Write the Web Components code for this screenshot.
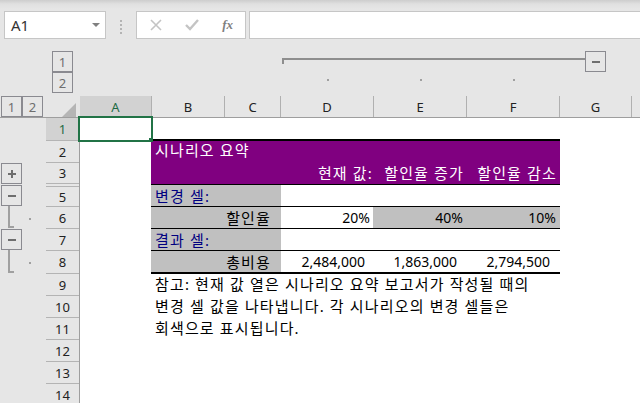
<!DOCTYPE html>
<html lang="ko">
<head>
<meta charset="utf-8">
<title>시나리오 요약</title>
<style>
    html, body { margin: 0; padding: 0; background: #fff; }
    body { width: 640px; height: 403px; overflow: hidden; font-family: "Noto Sans", "Noto Sans CJK KR", sans-serif; }
    sheet-cell.gray { --fill: #c0c0c0; }
    sheet-cell.white { --fill: #fff; }
    sheet-cell.purple { --fill: #800080; color: #fff; }
    sheet-cell.blue { color: #000080; }
    sheet-cell.thin { --line: 1px; }
    sheet-cell.thick { --line: 2px; }
    sheet-cell.top { --top: 1px; }
    sheet-cell.num { font-size: 14px; letter-spacing: 0; }
    sheet-cell.up1 { --up: 1px; }
    sheet-cell.up3 { --up: 3px; }
    sheet-cell.up4 { --up: 4px; }
</style>
</head>
<body>
<excel-window>
    <formula-bar slot="bar"></formula-bar>
    <outline-top slot="bar"></outline-top>
    <column-header slot="bar"></column-header>
    <outline-left slot="left"></outline-left>
    <row-numbers slot="left"></row-numbers>
    <sheet-view>
        <sheet-row h="23">
            <sheet-cell col="2" span="5" class="thick"></sheet-cell>
        </sheet-row>
        <sheet-row h="22">
            <sheet-cell col="2" span="5" class="purple up4">시나리오 요약</sheet-cell>
        </sheet-row>
        <sheet-row h="21">
            <sheet-cell col="2" span="2" class="purple"></sheet-cell>
            <sheet-cell col="4" class="purple up1" align="right" pad="0">현재 값:</sheet-cell>
            <sheet-cell col="5" class="purple up1" align="right" pad="2">할인율 증가</sheet-cell>
            <sheet-cell col="6" class="purple up1" align="right" pad="3">할인율 감소</sheet-cell>
        </sheet-row>
        <sheet-row h="23">
            <sheet-cell col="2" span="2" class="gray blue thin top">변경 셀:</sheet-cell>
            <sheet-cell col="4" span="3" class="thin top"></sheet-cell>
        </sheet-row>
        <sheet-row h="22">
            <sheet-cell col="2" span="2" class="gray thin" align="right" pad="10">할인율</sheet-cell>
            <sheet-cell col="4" class="white thin num" align="right" pad="3">20%</sheet-cell>
            <sheet-cell col="5" class="gray thin num" align="right" pad="3">40%</sheet-cell>
            <sheet-cell col="6" class="gray thin num" align="right" pad="4">10%</sheet-cell>
        </sheet-row>
        <sheet-row h="22">
            <sheet-cell col="2" span="2" class="gray blue thin">결과 셀:</sheet-cell>
            <sheet-cell col="4" span="3" class="thin"></sheet-cell>
        </sheet-row>
        <sheet-row h="23">
            <sheet-cell col="2" span="2" class="gray thick" align="right" pad="10">총비용</sheet-cell>
            <sheet-cell col="4" class="white thick num" align="right" pad="8">2,484,000</sheet-cell>
            <sheet-cell col="5" class="white thick num" align="right" pad="9">1,863,000</sheet-cell>
            <sheet-cell col="6" class="white thick num" align="right" pad="10">2,794,500</sheet-cell>
        </sheet-row>
        <sheet-row h="22"><sheet-cell col="2" span="5" class="up3">참고: 현재 값 열은 시나리오 요약 보고서가 작성될 때의</sheet-cell></sheet-row>
        <sheet-row h="22"><sheet-cell col="2" span="5" class="up3">변경 셀 값을 나타냅니다. 각 시나리오의 변경 셀들은</sheet-cell></sheet-row>
        <sheet-row h="22"><sheet-cell col="2" span="5" class="up3">회색으로 표시됩니다.</sheet-cell></sheet-row>
    </sheet-view>
</excel-window>

<script>
const COLS = '71px 73px 57px 92px 93px 94px 72px 1fr';
const HEAD_COLS = '72px 73px 56px 93px 93px 93px 72px 1fr';
const FONT = '"Noto Sans", "Noto Sans CJK KR", sans-serif';
const BTN_CSS = `
    .btn { box-sizing: border-box; width: 21px; height: 21px; border: 1px solid #8a8a90; color: #6e6e6e;
        display: flex; align-items: center; justify-content: center; font: 13px ${FONT}; background: #e6e6e6; }
    .btn svg { display: block; }
`;
const PLUS = '<svg width="8" height="8"><path d="M0 3h8v2H0zM3 0h2v8H3z" fill="#6e6e6e"/></svg>';
const MINUS = '<svg width="8" height="8"><path d="M0 3h8v2H0z" fill="#6e6e6e"/></svg>';

function shadow(el, html) {
    el.attachShadow({ mode: 'open' }).innerHTML = html;
}

class ExcelWindow extends HTMLElement {
    connectedCallback() {
        shadow(this, `
            <style>
                :host { display: flex; flex-direction: column; width: 640px; height: 403px; overflow: hidden; background: #e6e6e6; }
                .body { display: flex; flex: 1; min-height: 0; }
                .left { display: flex; flex: none; }
                ::slotted(sheet-view) { flex: 1; }
            </style>
            <slot name="bar"></slot>
            <div class="body">
                <div class="left"><slot name="left"></slot></div>
                <slot></slot>
            </div>`);
    }
}

class FormulaBar extends HTMLElement {
    connectedCallback() {
        shadow(this, `
            <style>
                :host { display: flex; height: 38px; box-sizing: border-box; padding: 11px 0 0 4px;
                    background: linear-gradient(#cdcdcd 0, #e0e0e0 4px, #e6e6e6 9px); }
                .box { box-sizing: border-box; height: 28px; background: #fff; border: 1px solid #c6c6c6; display: flex; align-items: center; }
                .name { width: 102px; padding-left: 6px; font: 15px ${FONT}; color: #333; justify-content: space-between; padding-right: 5px; }
                .name i { width: 0; height: 0; border: 4px solid transparent; border-top-color: #808080; border-bottom: 0; }
                .sep { width: 30px; display: flex; justify-content: center; align-items: center; }
                .sep b { width: 2px; height: 2px; background: #b4b4b4; box-shadow: 0 4px #b4b4b4, 0 8px #b4b4b4, 0 -4px #b4b4b4; }
                .fx { width: 110px; justify-content: space-between; padding: 0 12px 0 13px; }
                .fx span { font: italic bold 13px "Liberation Serif", serif; color: #7f7f7f; }
                .input { flex: 1; margin-left: 3px; border-right: 0; }
            </style>
            <div class="box name">A1<i></i></div>
            <div class="sep"><b></b></div>
            <div class="box fx">
                <svg width="12" height="12" viewBox="0 0 12 12"><path d="M1 1l10 10M11 1L1 11" stroke="#c4c4c4" stroke-width="1.6" fill="none"/></svg>
                <svg width="14" height="12" viewBox="0 0 14 12"><path d="M1 6l4 4 8-9" stroke="#c4c4c4" stroke-width="2.4" fill="none"/></svg>
                <span>fx</span>
            </div>
            <div class="box input"></div>`);
    }
}

class OutlineTop extends HTMLElement {
    connectedCallback() {
        shadow(this, `
            <style>${BTN_CSS}
                :host { display: flex; height: 58px; box-sizing: border-box; padding: 13px 0 0 52px; }
                .levels { width: 229px; }
                .group { display: grid; grid-template-columns: 93px 93px 93px 25px 21px; grid-template-rows: 21px 7px 2px; }
                .bracket { grid-column: 1 / 5; margin: 7px 0 0 1px; height: 6px; box-sizing: border-box; border: solid #8e8e8e; border-width: 2px 0 0 2px; }
                .dot { grid-row: 3; justify-self: center; width: 2px; height: 2px; background: #a0a0a0; }
            </style>
            <div class="levels"><div class="btn">1</div><div class="btn">2</div></div>
            <div class="group">
                <div class="bracket"></div>
                <div class="btn">${MINUS}</div>
                <div class="dot" style="grid-column:1"></div>
                <div class="dot" style="grid-column:2"></div>
                <div class="dot" style="grid-column:3"></div>
            </div>`);
    }
}

class ColumnHeader extends HTMLElement {
    connectedCallback() {
        const cells = 'ABCDEFG'.split('').map((c, i) =>
            `<div class="col${i == 0 ? ' on' : ''}"><span>${c}</span></div>`).join('');
        shadow(this, `
            <style>${BTN_CSS}
                :host { display: flex; height: 22px; box-sizing: border-box; border-bottom: 1px solid #9e9e9e; }
                .levels { display: flex; width: 46px; padding-left: 1px; box-sizing: border-box; }
                .corner { width: 34px; box-sizing: border-box; padding: 4px 0 0 16px; }
                .grid { flex: 1; display: grid; grid-template-columns: ${HEAD_COLS}; }
                .col { border-right: 1px solid #b0b0b0; display: flex; align-items: center; justify-content: center;
                    font: 13px ${FONT}; color: #222; box-sizing: border-box; }
                .col.on { background: #d2d2d2; color: #1d6b45; }
            </style>
            <div class="levels"><div class="btn">1</div><div class="btn">2</div></div>
            <div class="corner"><svg width="14" height="14"><path d="M14 0v14H0z" fill="#b5b5b5"/></svg></div>
            <div class="grid">${cells}<div></div></div>`);
    }
}

class OutlineLeft extends HTMLElement {
    connectedCallback() {
        shadow(this, `
            <style>${BTN_CSS}
                :host { display: grid; width: 46px; grid-template-rows: 45px 21px 1px 21px 23px 21px 23px; grid-template-columns: 1px 21px 1fr; align-content: start; }
                .btn { grid-column: 2; }
                .tail { grid-column: 2; box-sizing: border-box; width: 6px; margin-left: 7px; height: 22px; border: solid #a0a0a0; border-width: 0 0 2px 2px; }
                .dot { grid-column: 3; width: 2px; height: 2px; background: #a0a0a0; margin: 12px 0 0 7px; }
            </style>
            <div class="btn" style="grid-row:2">${PLUS}</div>
            <div class="btn" style="grid-row:4">${MINUS}</div>
            <div class="tail" style="grid-row:5"></div>
            <div class="dot" style="grid-row:5"></div>
            <div class="btn" style="grid-row:6">${MINUS}</div>
            <div class="tail" style="grid-row:7;height:23px"></div>
            <div class="dot" style="grid-row:7"></div>`);
    }
}

class RowNumbers extends HTMLElement {
    connectedCallback() {
        const rows = [[1, 23], [2, 22], [3, 21], [5, 23], [6, 22], [7, 22], [8, 23], [9, 22], [10, 22], [11, 22], [12, 22], [13, 22], [14, 22]];
        const html = rows.map(([n, h]) =>
            `<div class="row${n == 1 ? ' on' : ''}${n == 5 ? ' after-hidden' : ''}" style="height:${h}px">${n}</div>`).join('');
        shadow(this, `
            <style>
                :host { display: block; width: 34px; box-sizing: border-box; border-right: 1px solid #9e9e9e; flex: none; }
                .row { box-sizing: border-box; border-bottom: 1px solid #b4b4b4; display: flex; align-items: center; justify-content: center;
                    font: 13px ${FONT}; color: #222; }
                .row.on { background: #d2d2d2; color: #1d6b45; }
                .row.after-hidden { border-top: 1px solid #b4b4b4; margin-top: 2px; height: 21px !important; }
            </style>${html}`);
    }
}

class SheetView extends HTMLElement {
    connectedCallback() {
        shadow(this, `
            <style>
                :host { display: block; position: relative; background: #fff; --cols: ${COLS};
                    font: 15px/16px ${FONT}; color: #000; letter-spacing: 1.15px; }
                .sel { position: absolute; left: -2px; top: -2px; width: 75px; height: 26px; box-sizing: border-box; border: 2px solid #217346; }
                .sel i { position: absolute; right: -2px; bottom: -2px; width: 4px; height: 4px; background: #217346; }
            </style>
            <slot></slot>
            <div class="sel"><i></i></div>`);
    }
}

class SheetRow extends HTMLElement {
    connectedCallback() {
        shadow(this, `
            <style>
                :host { display: grid; grid-template-columns: var(--cols); grid-template-rows: minmax(0, 1fr); height: ${this.getAttribute('h')}px; }
            </style>
            <slot></slot>`);
    }
}

class SheetCell extends HTMLElement {
    connectedCallback() {
        const col = +this.getAttribute('col');
        const span = +(this.getAttribute('span') || 1);
        this.style.gridColumn = `${col} / span ${span}`;
        const right = this.getAttribute('align') == 'right';
        shadow(this, `
            <style>
                :host { display: flex; align-items: center; box-sizing: border-box; white-space: nowrap; min-width: 0; min-height: 0;
                    background: var(--fill, transparent);
                    border-bottom: var(--line, 0) solid #000; border-top: var(--top, 0) solid #000;
                    justify-content: ${right ? 'flex-end' : 'flex-start'};
                    padding: 0 ${right ? this.getAttribute('pad') + 'px' : '0'} var(--up, 0) ${right ? '0' : '4px'}; }
            </style>
            <slot></slot>`);
    }
}

customElements.define('excel-window', ExcelWindow);
customElements.define('formula-bar', FormulaBar);
customElements.define('outline-top', OutlineTop);
customElements.define('column-header', ColumnHeader);
customElements.define('outline-left', OutlineLeft);
customElements.define('row-numbers', RowNumbers);
customElements.define('sheet-view', SheetView);
customElements.define('sheet-row', SheetRow);
customElements.define('sheet-cell', SheetCell);
</script>
</body>
</html>
